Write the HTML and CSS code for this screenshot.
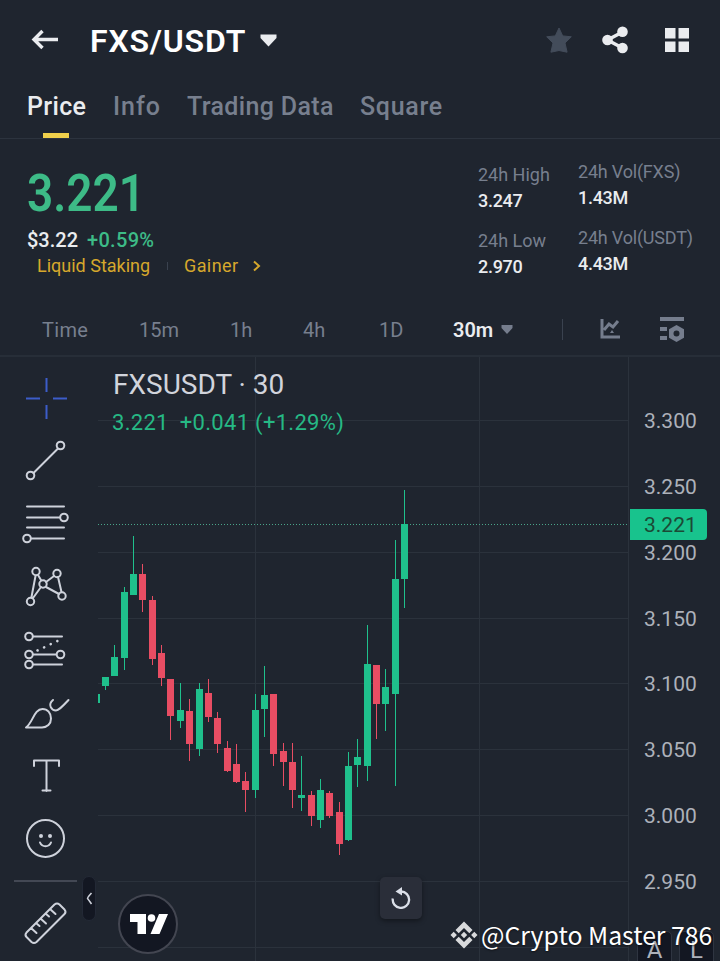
FILE: index.html
```html
<!DOCTYPE html>
<html lang="en">
<head>
    <meta charset="UTF-8">
    <title>FXS/USDT</title>
    <link rel="stylesheet" href="styles.css">
</head>
<body>
    <div class="app">
        <header class="header">
            <svg class="back" width="28" height="22" viewBox="0 0 28 22"><path d="M11.500 2L3 10.500l8.500 8.500M3 10.500h24" fill="none" stroke="#eaecef" stroke-width="3.400"/></svg>
            <h1 class="pair">FXS/USDT</h1>
            <svg class="caret" width="17" height="13" viewBox="0 0 17 13"><path d="M.5.5h16v3.500L8.500 12.500.5 4z" fill="#eaecef"/></svg>
            <div class="header-icons">
                <svg width="28" height="28" viewBox="0 0 28 28"><path d="M14 2l3.700 7.900 8.600.9-6.300 6.200 2.100 9.200L14 24.500l-8.100 1.700L8 17 1.700 10.800l8.600-.9z" fill="#434c5a" stroke="#434c5a" stroke-linejoin="round"/></svg>
                <svg width="28" height="28" viewBox="0 0 28 28"><path d="M21.500 6L6.500 14l15 8" fill="none" stroke="#eaecef" stroke-width="3.500"/><g fill="#eaecef"><circle cx="21.500" cy="5.800" r="5.300"/><circle cx="6.500" cy="14" r="5.300"/><circle cx="21.500" cy="22" r="5.300"/></g></svg>
                <svg width="26" height="26" viewBox="0 0 26 26"><path d="M1 1h10.500v10.500H1zM14.500 1H25v10.500H14.500zM1 14.500h10.500V25H1zM14.500 14.500H25V25H14.500z" fill="#eaecef"/></svg>
            </div>
        </header>

        <nav class="tabs">
            <span class="tab tab-price active">Price</span>
            <span class="tab tab-info">Info</span>
            <span class="tab tab-trading">Trading Data</span>
            <span class="tab tab-square">Square</span>
        </nav>

        <section class="summary">
            <div class="quote">
                <div class="last">3.221</div>
                <div class="fiat"><span>$3.22</span><span class="change">+0.59%</span></div>
                <div class="tags">
                    <span class="tag-liquid">Liquid Staking</span>
                    <i class="tag-sep"></i>
                    <span class="tag-gainer">Gainer</span>
                    <svg width="8" height="12" viewBox="0 0 8 12"><path d="M1 1.500L6 6l-5 4.500" fill="none" stroke="#d6a82c" stroke-width="2"/></svg>
                </div>
            </div>
            <dl class="stats">
                <dt>24h High</dt><dd>3.247</dd>
                <dt>24h Low</dt><dd>2.970</dd>
            </dl>
            <dl class="stats stats-vol">
                <dt>24h Vol(FXS)</dt><dd>1.43M</dd>
                <dt>24h Vol(USDT)</dt><dd>4.43M</dd>
            </dl>
        </section>

        <div class="intervals">
            <span class="iv iv-time">Time</span>
            <span class="iv iv-15m">15m</span>
            <span class="iv iv-1h">1h</span>
            <span class="iv iv-4h">4h</span>
            <span class="iv iv-1d">1D</span>
            <span class="iv iv-30m active">30m</span>
            <svg class="iv-caret" width="12" height="9" viewBox="0 0 12 9"><path d="M.5 0h11v3L6 9 .5 3z" fill="#757d8d"/></svg>
            <i class="iv-sep"></i>
            <svg class="iv-chart" width="20" height="20" viewBox="0 0 20 20"><path d="M2 0v18h18M4 11l5-6 4 3 5-6" fill="none" stroke="#757d8d" stroke-width="3"/><path d="M10 14l2-3 2 3z" fill="#757d8d"/></svg>
            <svg class="iv-set" width="26" height="26" viewBox="0 0 26 26"><g fill="#757d8d"><path d="M1 1h24v4H1zM1 11h7v4H1zM1 20h7v4H1z"/><path fill-rule="evenodd" d="M17.500 9l7.500 4.300v8.400L17.500 26 10 21.700v-8.400zM17.500 14.500a3 3 0 100 6 3 3 0 000-6z"/></g></svg>
        </div>

        <main class="chart">
            <aside class="tools">
                <svg viewBox="0 0 98 604" width="98" height="604">
                    <!-- crosshair -->
                    <path d="M46.500 21v14M46.500 48v14M26 41.500h14M53 41.500h14" stroke="#3c5dc9" stroke-width="2"/>
                    <g fill="none" stroke="#ced2db" stroke-width="2" stroke-linecap="round" stroke-linejoin="round">
                        <!-- trend line -->
                        <path d="M33.500 116l24-24"/>
                        <circle cx="30.500" cy="118.500" r="3.800"/><circle cx="60.500" cy="88.500" r="3.800"/>
                        <!-- fib levels -->
                        <path d="M27 149.500h37M27 160.500h33M27 170.500h37M31 181.500h33"/>
                        <circle cx="64" cy="160.500" r="3.800"/><circle cx="27" cy="181.500" r="3.800"/>
                        <!-- pattern -->
                        <path d="M31.500 240l4-21M38 218l3 5M33 241l8-11M46 225l8-6M58 220l3.500 15M46 230l13 7"/>
                        <circle cx="36" cy="214.500" r="3.700"/><circle cx="30.500" cy="244.500" r="3.700"/><circle cx="43" cy="227" r="3.700"/><circle cx="57" cy="216.500" r="3.700"/><circle cx="62" cy="239" r="3.700"/>
                        <!-- forecast -->
                        <path d="M33 279.500h29M33 297.500h23M33 307.500h29"/>
                        <path d="M37.500 293.500l23-11" stroke-width="2.600" stroke-dasharray=".1 7.200"/>
                        <circle cx="29" cy="279.500" r="3.800"/><circle cx="29" cy="297.500" r="3.800"/><circle cx="60.500" cy="297.500" r="3.800"/><circle cx="29" cy="307.500" r="3.800"/>
                        <!-- brush -->
                        <path d="M26 370.500c7-5 8-18.500 16.500-18.500 5 0 8.500 4 8.500 9.500 0 5.500-4 9-9 9zM53 343c-6 5-1 10.500 3 10.500 2.500 0 5-2.500 12.500-10.500"/>
                        <!-- text -->
                        <path d="M34 409v-5.500h25v5.500M46.500 404v30M42.500 433.500h8"/>
                        <!-- emoji -->
                        <circle cx="45.500" cy="481.500" r="18.500"/>
                        <path d="M40 485.500c2 5 9 5 11 0"/>
                        <g fill="#ced2db" stroke="none"><circle cx="41" cy="479" r="2"/><circle cx="50" cy="479" r="2"/></g>
                        <!-- ruler -->
                        <path d="M26.500 575.500l28-28q2.500-2 5 0l5 5q2 2.500 0 4.500l-28 28q-2.500 2-5 0l-5-5q-2-2 0-4.500zM31 571l5.500 5M36 566l3.500 3M40.500 561.500l5.500 5M45.500 556.500l3.500 3M50 552l5.500 5"/>
                    </g>
                    <path d="M14 524h63" stroke="#434854" stroke-width="2"/>
                </svg>
            </aside>

            <div class="plot">
                <svg viewBox="98 357 531 604" width="531" height="604">
                    <path class="grid" d="M98 420.500h531M98 486.500h531M98 552.500h531M98 618.500h531M98 683.500h531M98 749.500h531M98 815.500h531M98 881.500h531M98 947.500h531M255.500 357v604M479.500 357v604M628.500 357v604"/>
                    <path class="last-line" d="M98 524.500h531"/>
                    <path class="wick up" d="M105.500 677v13M114.500 645v31M124.500 587v83M133.500 536v59M180.500 683v45M199.500 683v73M255.500 694v104M264.500 666v71M301.500 756v55M320.500 779v49M348.500 752v89M357.500 739v48M367.500 625v156M385.500 669v62M395.500 540v246M404.500 490v118"/>
                    <path class="body up" d="M105.500 677v9M114.500 657v19M124.500 592v66M133.500 574v21M180.500 710v11M199.500 689v60M255.500 710v80M264.500 695v14M301.500 795v3M320.500 790v30M348.500 766v74M357.500 757v8M367.500 664v102M385.500 687v17M395.500 579v115M404.500 524v55M96.500 694v9"/>
                    <path class="wick down" d="M142.500 564v48M152.500 596v69M161.500 645v41M170.500 679v61M189.500 699v62M208.500 679v43M217.500 712v41M227.500 741v31M236.500 744v39M245.500 772v40M273.500 694v72M283.500 743v43M292.500 743v65M311.500 791v35M329.500 791v27M339.500 802v53M376.500 665v74"/>
                    <path class="body down" d="M142.500 574v26M152.500 600v59M161.500 653v25M170.500 679v37M189.500 711v33M208.500 693v24M217.500 718v26M227.500 748v23M236.500 764v18M245.500 781v9M273.500 694v60M283.500 751v11M292.500 762v28M311.500 795v21M329.500 793v23M339.500 812v32M376.500 665v39"/>
                </svg>
                <div class="legend">
                    <div class="legend-title">FXSUSDT · 30</div>
                    <div class="legend-values">3.221<span>+0.041 (+1.29%)</span></div>
                </div>
                <div class="tv-logo">
                    <svg width="40" height="22" viewBox="0 0 40 22"><path d="M2 1h16v20h-8.500V9H2zM31 1h9l-8.500 20h-9z" fill="#fff"/><circle cx="23.500" cy="5" r="3.800" fill="#fff"/></svg>
                </div>
                <div class="reset">
                    <svg width="20" height="22" viewBox="0 0 20 22"><path d="M1.800 11.500A8.200 8.200 0 1010 4.500H7" fill="none" stroke="#dbdfe8" stroke-width="2.300"/><path d="M4.500 4.500L11 0v8.500z" fill="#dbdfe8"/></svg>
                </div>
            </div>

            <div class="axis">
                <span>3.300</span>
                <span>3.250</span>
                <span>3.200</span>
                <span>3.150</span>
                <span>3.100</span>
                <span>3.050</span>
                <span>3.000</span>
                <span>2.950</span>
                <b class="price-tag">3.221</b>
                <div class="scale">
                    <span class="scale-btn">A</span>
                    <span class="scale-btn">L</span>
                </div>
            </div>

            <div class="collapse">
                <svg width="7" height="13" viewBox="0 0 7 13"><path d="M5.500 1Q1 6 1.500 6.500T5.500 12" fill="none" stroke="#ced2db" stroke-width="1.600"/></svg>
            </div>
        </main>

        <div class="credit">
            <svg width="28" height="28" viewBox="0 0 28 28"><g fill="#d9dadc"><path d="M14 .5l8.500 8.500-3.200 3.200L14 7l-5.300 5.200L5.500 9zM14 27.500L5.500 19l3.200-3.200L14 21l5.300-5.200 3.200 3.200zM14 10.800l3.200 3.200-3.200 3.200-3.200-3.200zM3.700 10.800L6.900 14l-3.200 3.200L.5 14zM24.300 10.800l3.200 3.200-3.200 3.200-3.200-3.200z"/></g></svg>
            <span>@Crypto Master 786</span>
        </div>
    </div>
</body>
</html>
```
FILE: styles.css
```css
body {
    margin: 0;
    background: #1f252f;
    font-family: Roboto, "Liberation Sans", sans-serif;
    overflow: hidden;
}
svg {
    display: block;
    flex: none;
}
.app {
    position: relative;
    width: 720px;
    height: 961px;
    overflow: hidden;
    color: #eaecef;
    white-space: nowrap;
}
.header {
    display: flex;
    align-items: center;
    height: 80px;
    padding: 0 30px 0 31px;
}
.pair {
    width: 156px;
    margin: 1px 14px 0 31px;
    font-size: 32px;
    font-weight: 600;
    letter-spacing: .8px;
    color: #fff;
}
.header-icons {
    display: flex;
    align-items: center;
    gap: 28px;
    margin-left: auto;
}
.header-icons svg:last-child {
    margin-left: 7px;
}

.tabs {
    display: flex;
    height: 58px;
    padding-left: 27px;
    border-bottom: 1px solid #2c333e;
    font-size: 25px;
    font-weight: 500;
    line-height: 53px;
    letter-spacing: .35px;
    color: #777f8e;
}
.tab {
    position: relative;
}
.tab-price { width: 86px; }
.tab-info {
    width: 74px;
    letter-spacing: 1px;
}
.tab-trading { width: 173px; }
.tab-square { letter-spacing: .7px; }
.tabs .active {
    color: #eaecef;
}
.tabs .active::after {
    content: "";
    position: absolute;
    left: 16px;
    bottom: 0;
    width: 26px;
    height: 5px;
    background: #f0d04b;
}

.summary {
    display: flex;
    height: 163px;
    padding-left: 27px;
}
.quote {
    width: 451px;
    padding-top: 27px;
}
.last {
    height: 54px;
    font-size: 51px;
    font-weight: 600;
    line-height: 56px;
    color: #3dbb87;
    transform: scaleX(.9);
    transform-origin: left;
}
.fiat {
    display: flex;
    gap: 9px;
    height: 31px;
    font-size: 20px;
    font-weight: 500;
    line-height: 40px;
}
.change {
    letter-spacing: .3px;
    color: #3dbb87;
}
.tags {
    display: flex;
    align-items: center;
    height: 29px;
    padding: 0 0 0 10px;
    font-size: 18px;
    color: #d6a82c;
}
.tag-liquid { width: 130px; }
.tag-gainer {
    width: 69px;
    letter-spacing: .4px;
}
.tag-sep {
    width: 1px;
    height: 8px;
    margin-right: 16px;
    background: #3a424f;
}
.stats {
    width: 100px;
    margin: 0;
    padding-top: 23px;
    font-size: 18px;
    line-height: 26px;
}
.stats-vol {
    width: 130px;
    padding-top: 20px;
}
.stats dt {
    color: #777f8e;
}
.stats-vol dt {
    letter-spacing: -.2px;
}
.stats dd {
    margin: 0 0 14px;
    font-weight: 500;
    letter-spacing: -.3px;
}

.intervals {
    display: flex;
    align-items: center;
    height: 52px;
    padding: 1px 0 0 42px;
    border-bottom: 2px solid #272e38;
    font-size: 20px;
    color: #777f8e;
}
.iv {
    padding-top: 2px;
}
.iv-time {
    width: 97px;
    letter-spacing: .3px;
}
.iv-15m { width: 91px; }
.iv-1h { width: 73px; }
.iv-4h { width: 76px; }
.iv-1d { width: 74px; }
.iv-30m { width: 48px; }
.intervals .active {
    color: #eaecef;
    font-weight: 600;
}
.iv-sep {
    width: 1px;
    height: 21px;
    margin: 0 37px 0 49px;
    background: #3a424f;
}
.iv-set {
    margin-left: 39px;
}

.chart {
    position: relative;
    display: flex;
    height: 605px;
}
.plot {
    position: relative;
    width: 531px;
}
.grid {
    fill: none;
    stroke: #2b323c;
}
.last-line {
    stroke: #4aa58a;
    stroke-dasharray: 1 2;
}
.up { stroke: #1fc08c; }
.down { stroke: #e84d63; }
.wick { stroke-width: 1; }
.body { stroke-width: 7; }

.legend {
    position: absolute;
    left: 14px;
    top: 10px;
}
.legend-title {
    padding-left: 1px;
    font-size: 28px;
    line-height: 36px;
    color: #d1d4dc;
}
.legend-values {
    margin-top: 4px;
    font-size: 22px;
    line-height: 32px;
    letter-spacing: .3px;
    color: #26b985;
}
.legend-values span {
    margin-left: 11px;
}
.tv-logo {
    position: absolute;
    left: 20px;
    top: 537px;
    display: flex;
    align-items: center;
    justify-content: center;
    box-sizing: border-box;
    width: 60px;
    height: 60px;
    border: 2px solid #434651;
    border-radius: 50%;
    background: #131722;
}
.reset {
    position: absolute;
    left: 282px;
    top: 520px;
    display: flex;
    align-items: center;
    justify-content: center;
    width: 42px;
    height: 42px;
    border-radius: 5px;
    background: #2a2e39;
    box-shadow: 0 2px 5px #0006;
}

.axis {
    position: relative;
    display: grid;
    grid-auto-rows: 65.860px;
    width: 91px;
    box-sizing: border-box;
    padding: 31px 0 0 15px;
    font-size: 21px;
    line-height: 66px;
    color: #adb1ba;
}
.price-tag {
    position: absolute;
    left: 1px;
    top: 152px;
    width: 63px;
    height: 31px;
    padding-left: 14px;
    border-radius: 0 4px 4px 0;
    background: #18c38d;
    color: #1b4a35;
    font-weight: 400;
    line-height: 32px;
}
.scale {
    position: absolute;
    left: 8px;
    top: 574px;
    display: flex;
    gap: 7px;
}
.scale-btn {
    width: 33px;
    height: 40px;
    border: 1px solid #2f3541;
    border-radius: 5px;
    background: #131722;
    font-size: 24px;
    line-height: 37px;
    text-align: center;
}
.collapse {
    position: absolute;
    left: 82px;
    top: 519px;
    display: flex;
    align-items: center;
    justify-content: center;
    box-sizing: border-box;
    width: 14px;
    height: 45px;
    border: 1px solid #232936;
    border-radius: 7px;
    background: #131722;
}

/* author handle drawn over the bottom corner */
.credit {
    position: absolute;
    left: 450px;
    top: 920px;
    display: flex;
    align-items: center;
    gap: 3px;
    font-family: "Noto Sans CJK SC", sans-serif;
    font-size: 24.800px;
    line-height: 32px;
    color: #fff;
    text-shadow: 0 1px 2px #0008;
}
.credit span {
    margin-top: -2px;
}
```
